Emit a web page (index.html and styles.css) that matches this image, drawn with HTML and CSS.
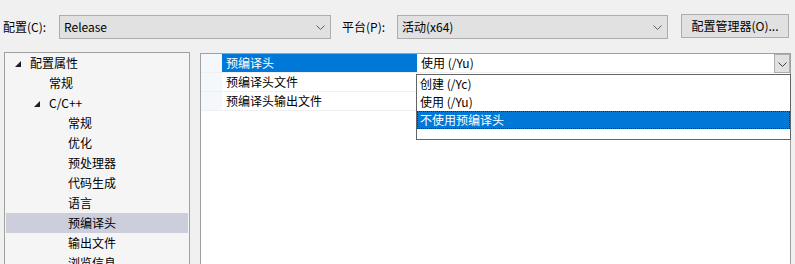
FILE: index.html
```html
<!DOCTYPE html>
<html lang="zh">
<head>
<meta charset="utf-8">
<link rel="stylesheet" href="styles.css">
</head>
<body>
<div class="topbar">
  <span class="lbl lbl1">配置(C):</span>
  <div class="combo combo1"><span class="ctext">Release</span><svg class="chev" width="9" height="5" viewBox="0 0 9 5"><polyline points="0.5,0.5 4.5,4.5 8.5,0.5" fill="none" stroke="#606060" stroke-width="1"/></svg></div>
  <span class="lbl lbl2">平台(P):</span>
  <div class="combo combo2"><span class="ctext">活动(x64)</span><svg class="chev" width="9" height="5" viewBox="0 0 9 5"><polyline points="0.5,0.5 4.5,4.5 8.5,0.5" fill="none" stroke="#606060" stroke-width="1"/></svg></div>
  <button class="btn">配置管理器(O)...</button>
</div>
<div class="main">
  <div class="tree">
    <div class="row l0"><span class="twist"><svg width="6" height="6" viewBox="0 0 6 6"><polygon points="6,0 6,6 0,6" fill="#1e1e1e"/></svg></span>配置属性</div>
    <div class="row l1">常规</div>
    <div class="row l1"><span class="twist"><svg width="6" height="6" viewBox="0 0 6 6"><polygon points="6,0 6,6 0,6" fill="#1e1e1e"/></svg></span>C/C++</div>
    <div class="row l2">常规</div>
    <div class="row l2">优化</div>
    <div class="row l2">预处理器</div>
    <div class="row l2">代码生成</div>
    <div class="row l2">语言</div>
    <div class="row l2 sel">预编译头</div>
    <div class="row l2">输出文件</div>
    <div class="row l2">浏览信息</div>
  </div>
  <div class="grid">
    <div class="prow">
      <div class="gut"></div>
      <div class="name selname">预编译头</div>
      <div class="val"><span class="vtext">使用 (/Yu)</span><span class="dbtn"><svg width="9" height="5" viewBox="0 0 9 5"><polyline points="0.5,0.5 4.5,4.5 8.5,0.5" fill="none" stroke="#404040" stroke-width="1"/></svg></span></div>
    </div>
    <div class="prow">
      <div class="gut"></div>
      <div class="name">预编译头文件</div>
      <div class="val"></div>
    </div>
    <div class="prow">
      <div class="gut"></div>
      <div class="name">预编译头输出文件</div>
      <div class="val"></div>
    </div>
    <div class="dropdown">
      <div class="opt">创建 (/Yc)</div>
      <div class="opt">使用 (/Yu)</div>
      <div class="opt hi">不使用预编译头</div>
    </div>
  </div>
</div>
</body>
</html>
```
FILE: styles.css
```css
html, body {
  margin: 0;
  padding: 0;
  background: #f0f0f0;
  width: 795px;
  height: 264px;
  overflow: hidden;
  font-family: "Noto Sans CJK SC", "Noto Sans", sans-serif;
  font-size: 12px;
  color: #000;
}

.topbar {
  height: 52px;
  display: flex;
  align-items: flex-start;
  padding-top: 14px;
  box-sizing: border-box;
}

.lbl {
  margin-top: 1px;
  height: 24px;
  line-height: 24px;
}
.lbl1 { padding-left: 3px; width: 56px; }
.lbl2 { margin-left: 11px; width: 55px; }

.combo {
  margin-top: 1px;
  height: 24px;
  box-sizing: border-box;
  background: #e1e1e1;
  border: 1px solid #adadad;
  display: flex;
  align-items: center;
  justify-content: space-between;
  padding: 0 5px 0 4px;
}
.combo1 { width: 272px; }
.combo2 { width: 271px; }
.ctext { line-height: 22px; }
.chev { display: block; margin-top: 1px; }

.btn {
  margin-left: 13px;
  width: 108px;
  height: 24px;
  box-sizing: border-box;
  background: #e1e1e1;
  border: 1px solid #adadad;
  font-family: inherit;
  font-size: 12px;
  color: #000;
  padding: 0;
  line-height: 22px;
}

.main {
  display: flex;
  align-items: flex-start;
}

.tree {
  margin-left: 4px;
  width: 186px;
  height: 240px;
  box-sizing: border-box;
  border: 1px solid #a0a0a0;
  background: #f5f5f5;
}

.row {
  height: 20px;
  line-height: 20px;
  display: flex;
  align-items: center;
  white-space: nowrap;
}
.l0 { padding-left: 25px; }
.l1 { padding-left: 44px; }
.l2 { padding-left: 63px; }
.twist {
  width: 15px;
  margin-left: -15px;
  display: flex;
  align-items: center;
  height: 20px;
}
.twist svg { display: block; margin-top: 1px; }
.sel {
  background: #cccedb;
  margin: 0 1px;
  padding-left: 62px;
}

.grid {
  position: relative;
  margin-left: 10px;
  margin-top: 1px;
  width: 591px;
  height: 240px;
  box-sizing: border-box;
  border: 1px solid #a0a0a0;
  background: #fff;
}

.prow {
  display: flex;
  height: 19px;
  box-sizing: border-box;
  border-bottom: 1px solid #f0f0f0;
}
.gut {
  width: 21px;
  background: #f4f7fc;
}
.name {
  width: 195px;
  box-sizing: border-box;
  padding-left: 4px;
  line-height: 18px;
  border-right: 1px solid #f0f0f0;
  white-space: nowrap;
}
.selname {
  background: #0078d7;
  color: #fff;
  border-right-color: #0078d7;
}
.val {
  flex: 1;
  display: flex;
  justify-content: space-between;
  line-height: 18px;
}
.vtext { padding-left: 4px; }
.dbtn {
  width: 16px;
  height: 19px;
  box-sizing: border-box;
  background: #e1e1e1;
  border: 1px solid #adadad;
  display: flex;
  align-items: center;
  justify-content: center;
}
.dbtn svg { display: block; margin-top: 1px; }

.dropdown {
  position: absolute;
  left: 215px;
  top: 20px;
  width: 375px;
  height: 66px;
  box-sizing: border-box;
  border: 1px solid #646464;
  background: #fff;
}
.opt {
  height: 18px;
  line-height: 18px;
  padding-left: 3px;
  white-space: nowrap;
}
.opt.hi {
  background: #0078d7;
  color: #fff;
  outline: 1px dotted #3a2a10;
  outline-offset: -1px;
}
```
